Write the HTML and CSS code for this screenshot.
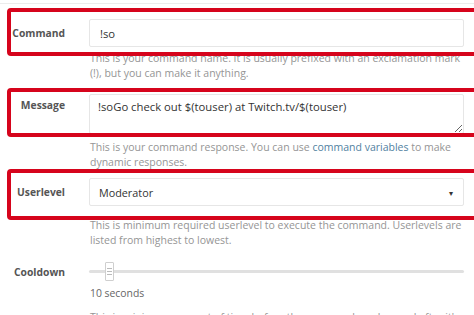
FILE: index.html
```html
<!DOCTYPE html>
<html>
<head>
<meta charset="utf-8">
<link rel="stylesheet" href="styles.css">
</head>
<body>
<div class="topline"></div>
<form class="form">
  <div class="field hl hl-1">
    <label class="lbl">Command</label>
    <input class="inp" type="text" value="!so">
  </div>
  <p class="help help-1">This is your command name. It is usually prefixed with an exclamation mark (!), but you can make it anything.</p>

  <div class="field hl hl-2">
    <label class="lbl lbl-ta">Message</label>
    <textarea class="ta">!soGo check out $(touser) at Twitch.tv/$(touser)</textarea>
  </div>
  <p class="help help-2">This is your command response. You can use <a class="link">command variables</a> to make dynamic responses.</p>

  <div class="field hl hl-3">
    <label class="lbl">Userlevel</label>
    <div class="sel"><span class="sel-text">Moderator</span><span class="arrow">&#9662;</span></div>
  </div>
  <p class="help help-3">This is minimum required userlevel to execute the command. Userlevels are listed from highest to lowest.</p>

  <div class="field field-slider">
    <label class="lbl lbl-slider">Cooldown</label>
    <div class="slider">
      <div class="track"></div>
      <div class="thumb"><i></i><i></i><i></i></div>
    </div>
  </div>
  <p class="value">10 seconds</p>
  <p class="help help-4">This is minimum amount of time before the command can be used after it's triggered.</p>
</form>
</body>
</html>
```

FILE: styles.css
```css
html, body {
  margin: 0;
  padding: 0;
  background: #ffffff;
  overflow: hidden;
}
body {
  font-family: "Open Sans", "Noto Sans", sans-serif;
  color: #333;
  width: 474px;
  height: 315px;
}
.topline {
  margin-top: 3px;
  height: 1px;
  background: #ececec;
}
.form {
  padding-top: 15px;
}
.field {
  display: grid;
  grid-template-columns: 65px 375px;
  column-gap: 24px;
  align-items: center;
  position: relative;
}
.lbl {
  text-align: right;
  font-size: 10.3px;
  font-weight: 700;
  color: #555;
}
.lbl-ta {
  align-self: start;
  padding-top: 4px;
}
.inp, .sel {
  box-sizing: border-box;
  height: 28px;
  width: 375px;
  border: 1px solid #e6e6e6;
  border-radius: 2px;
  background: #fff;
  font-family: "Open Sans", "Noto Sans", sans-serif;
  font-size: 11.3px;
  color: #333;
  padding: 0 10px;
  margin: 0;
  outline: none;
}
.sel {
  display: flex;
  align-items: center;
  justify-content: space-between;
  padding: 0 10px 0 9px;
}
.sel-text {
  font-size: 10.8px;
}
.arrow {
  font-size: 8px;
  color: #333;
}
.ta {
  box-sizing: border-box;
  width: 375px;
  height: 40px;
  border: 1px solid #e6e6e6;
  border-radius: 2px;
  font-family: "Open Sans", "Noto Sans", sans-serif;
  font-size: 11.3px;
  line-height: 18px;
  color: #333;
  padding: 3px 8px;
  margin: 0;
  resize: vertical;
  display: block;
  outline: none;
}
.help {
  margin: 0 0 0 90px;
  width: 384px;
  font-size: 10.5px;
  line-height: 15px;
  color: #959595;
}
.link {
  color: #517f9f;
}
.help-1 { margin-top: 4px; margin-bottom: 13px; }
.help-2 { margin-top: 6px; margin-bottom: 8px; }
.help-3 { margin-top: 12px; margin-bottom: 14px; }
.hl::before {
  content: "";
  position: absolute;
  left: 7px;
  right: -5px;
  border: 4px solid #d6041c;
  border-radius: 4px;
  pointer-events: none;
}
.hl-1::before { top: -11px; bottom: -9px; }
.hl-2::before { top: -6px; bottom: -3px; }
.hl-3::before { top: -9px; bottom: -14px; }
.slider {
  position: relative;
  height: 19px;
  display: flex;
  align-items: center;
}
.track {
  height: 3px;
  width: 375px;
  background: #e0e0e0;
  border-radius: 2px;
}
.thumb {
  position: absolute;
  left: 16px;
  top: 0;
  box-sizing: border-box;
  width: 9px;
  height: 19px;
  background: #fff;
  border: 1px solid #cfcfcf;
  border-radius: 1px;
  display: flex;
  flex-direction: column;
  justify-content: center;
  gap: 2px;
  align-items: center;
}
.thumb i {
  display: block;
  width: 5px;
  height: 1px;
  background: #bbb;
}
.value {
  margin: 4px 0 0 90px;
  font-size: 10.4px;
  line-height: 16px;
  color: #666;
}
.help-4 { margin-top: 9px; }
```
